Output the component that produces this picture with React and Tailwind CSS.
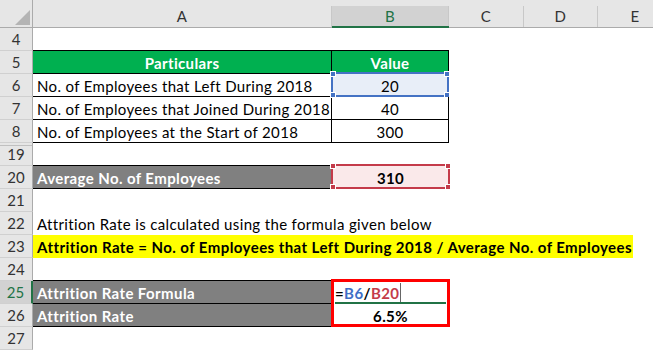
import React from 'react';

const COLS = [
  { key: 'A', w: 'w-[299px]' },
  { key: 'B', w: 'w-[117px]' },
  { key: 'C', w: 'w-[75px]' },
  { key: 'D', w: 'w-[74px]' },
  { key: 'E', w: 'w-[75px]' },
];

function Corner() {
  return (
    <div className="relative w-[33px] h-[28px] shrink-0 bg-[#e6e6e6] border-r border-b border-[#ababab]">
      <svg className="absolute left-0 top-0" width="33" height="28" viewBox="0 0 33 28">
        <polygon points="15,25 30,25 30,10" fill="#b4b4b4" />
      </svg>
    </div>
  );
}

function ColHead({ col }) {
  const selected = col.key === 'B';
  return (
    <div
      className={`${col.w} h-[28px] shrink-0 flex flex-col bg-[#e6e6e6] ${
        selected ? 'border-b-2 border-[#217346]' : 'border-b border-[#ababab]'
      }`}
    >
      <div
        className={`mt-[6px] flex-1 flex items-center justify-center border-r border-[#c8c8c8] ${
          selected ? 'bg-[#d2d2d2] text-[#217346]' : 'text-[#333]'
        }`}
      >
        {col.key}
      </div>
    </div>
  );
}

function RowHead({ n, selected, gap }) {
  return (
    <div
      className={`relative w-[33px] h-[23px] shrink-0 flex items-center justify-center border-b border-b-[#d0d0d0] tracking-normal ${
        selected
          ? 'bg-[#d2d2d2] text-[#217346] border-r-2 border-r-[#217346]'
          : 'bg-[#e6e6e6] text-[#333] border-r border-r-[#ababab]'
      }`}
    >
      {gap && <div className="absolute left-0 right-0 top-[2px] border-t border-[#c0c0c0]" />}
      <span className="pt-[1px]">{n}</span>
    </div>
  );
}

function Handles({ color }) {
  const cls = `absolute w-[6px] h-[6px] border border-white ${color}`;
  return (
    <>
      <div className={`${cls} -left-[3px] -top-[3px]`} />
      <div className={`${cls} -right-[3px] -top-[3px]`} />
      <div className={`${cls} -left-[3px] -bottom-[3px]`} />
      <div className={`${cls} -right-[3px] -bottom-[3px]`} />
    </>
  );
}

function Row({ n, selected, gap, children }) {
  return (
    <div className="flex h-[23px]">
      <RowHead n={n} selected={selected} gap={gap} />
      <div className="flex flex-1 h-[23px] min-w-0">{children}</div>
    </div>
  );
}

function TableRow({ label, value, head, active }) {
  return (
    <>
      <div
        className={`w-[299px] h-[23px] shrink-0 flex items-center border-r border-b border-black px-[4px] pt-[2px] whitespace-nowrap ${
          head ? 'bg-[#00b050] text-white font-bold justify-center' : 'text-black'
        }`}
      >
        {label}
      </div>
      <div
        className={`relative w-[117px] h-[23px] shrink-0 flex items-center justify-center border-r border-b border-black pt-[2px] ${
          head ? 'bg-[#00b050] text-white font-bold' : active ? 'bg-[#e8eef8] text-black' : 'text-black'
        }`}
      >
        {value}
        {active && (
          <div className="absolute -left-[1px] -top-[2px] -right-[1px] -bottom-[1px] border-2 border-[#4472c4]">
            <Handles color="bg-[#4472c4]" />
          </div>
        )}
      </div>
    </>
  );
}

function GrayLabel({ children }) {
  return (
    <div className="w-[299px] h-[23px] shrink-0 flex items-center bg-[#808080] text-white font-bold tracking-[0.4px] px-[4px] pt-[2px] border-b border-r border-black whitespace-nowrap">
      {children}
    </div>
  );
}

export default function App() {
  return (
    <div className="w-[653px] h-[352px] overflow-hidden bg-white text-[15px] leading-none tracking-[0.35px] font-[Lato,'Liberation_Sans',sans-serif]">
      <div className="flex">
        <Corner />
        {COLS.map((c) => (
          <ColHead key={c.key} col={c} />
        ))}
      </div>

      <Row n={4}>
        <div className="w-[299px] shrink-0 border-b border-black" />
        <div className="w-[117px] shrink-0 border-b border-black" />
      </Row>
      <Row n={5}>
        <TableRow head label="Particulars" value="Value" />
      </Row>
      <Row n={6}>
        <TableRow label="No. of Employees that Left During 2018" value="20" active />
      </Row>
      <Row n={7}>
        <TableRow label="No. of Employees that Joined During 2018" value="40" />
      </Row>
      <Row n={8}>
        <TableRow label="No. of Employees at the Start of 2018" value="300" />
      </Row>
      <Row n={19} gap>
        <div className="w-[299px] shrink-0 border-b border-black" />
      </Row>
      <Row n={20}>
        <GrayLabel>Average No. of Employees</GrayLabel>
        <div className="relative w-[117px] h-[23px] shrink-0 flex items-center justify-center pt-[2px] bg-[#fae9ea] font-bold text-black">
          310
          <div className="absolute -left-[1px] -top-[2px] -right-[1px] bottom-0 border-2 border-[#c43b4a]">
            <Handles color="bg-[#c43b4a]" />
          </div>
        </div>
      </Row>
      <Row n={21} />
      <Row n={22}>
        <div className="flex items-center px-[4px] pt-[2px] text-black whitespace-nowrap">
          Attrition Rate is calculated using the formula given below
        </div>
      </Row>
      <Row n={23}>
        <div className="w-[600px] shrink-0 flex items-center px-[4px] pt-[2px] bg-[#ffff00] text-black font-bold tracking-[0.43px] whitespace-nowrap">
          Attrition Rate = No. of Employees that Left During 2018 / Average No. of Employees
        </div>
      </Row>
      <Row n={24}>
        <div className="w-[299px] shrink-0 border-b border-black" />
      </Row>
      <Row n={25} selected>
        <GrayLabel>Attrition Rate Formula</GrayLabel>
        <div className="relative w-[117px] h-[23px] shrink-0 flex items-center font-bold tracking-[0.4px] pl-[3px] pt-[1px]">
          <span className="text-black">=</span>
          <span className="text-[#3f6fc6]">B6</span>
          <span className="text-black">/</span>
          <span className="text-[#c43b4a]">B20</span>
          <span className="ml-[1px] w-px h-[20px] bg-[#666]" />
          <div className="absolute left-[3px] right-[3px] bottom-0 h-[2px] bg-[#217346]" />
          <div className="absolute -left-[1px] -top-[2px] w-[119px] h-[48px] border-[3px] border-[#ff0000]" />
        </div>
      </Row>
      <Row n={26}>
        <GrayLabel>Attrition Rate</GrayLabel>
        <div className="w-[117px] h-[23px] shrink-0 flex items-center justify-center pt-[2px] font-bold tracking-[0.4px] text-black">
          6.5%
        </div>
      </Row>
      <Row n={27} />
    </div>
  );
}
